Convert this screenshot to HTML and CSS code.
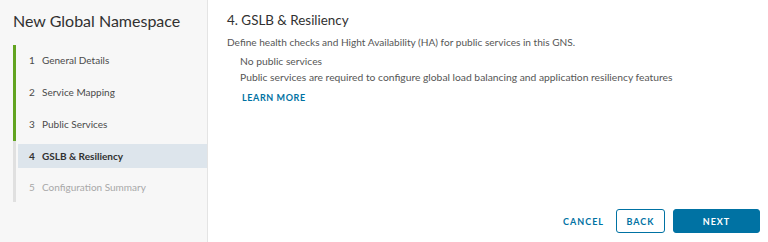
FILE: index.html
```html
<!DOCTYPE html>
<html>
<head>
<meta charset="utf-8">
<link rel="stylesheet" href="styles.css">
</head>
<body>
<div class="wizard">
  <aside class="nav">
    <h1 class="nav-title">New Global Namespace</h1>
    <ol class="steps">
      <li class="step done"><span class="num">1</span>General Details</li>
      <li class="step done"><span class="num">2</span>Service Mapping</li>
      <li class="step done"><span class="num">3</span>Public Services</li>
      <li class="step current"><span class="num">4</span>GSLB &amp; Resiliency</li>
      <li class="step todo"><span class="num">5</span>Configuration Summary</li>
    </ol>
  </aside>
  <main class="content">
    <h2 class="page-title">4. GSLB &amp; Resiliency</h2>
    <p class="desc">Define health checks and Hight Availability (HA) for public services in this GNS.</p>
    <div class="empty">
      <p class="empty-line">No public services</p>
      <p class="empty-line">Public services are required to configure global load balancing and application resiliency features</p>
      <a class="learn">LEARN MORE</a>
    </div>
    <div class="footer">
      <button class="btn link">CANCEL</button>
      <button class="btn outline">BACK</button>
      <button class="btn primary">NEXT</button>
    </div>
  </main>
</div>
</body>
</html>
```
FILE: styles.css
```css
* { box-sizing: border-box; }
html, body { margin: 0; padding: 0; }
body {
  width: 768px; height: 242px; overflow: hidden;
  font-family: "Lato", "Noto Sans", sans-serif;
  color: #565656;
  background: #fff;
}
.wizard { display: flex; height: 242px; }
.nav {
  width: 208px; flex: none;
  background: #f7f7f7;
  border-right: 1px solid #e4e4e4;
  padding: 10px 0 0 13px;
}
.nav-title {
  margin: 0;
  font-size: 16px; font-weight: 400; color: #313131;
  line-height: 22px;
}
.steps {
  list-style: none; margin: 13px 0 0 0; padding: 0;
  display: flex; flex-direction: column;
}
.step {
  height: 32px; display: flex; align-items: center;
  font-size: 10px; color: #4a4a4a;
  border-left: 3px solid #62a420;
  padding: 0 0 2px 13px;
  position: relative;
  isolation: isolate;
}
.step .num { width: 13px; }
.step.current {
  border-left-color: #e0e0e0;
  font-weight: 700; color: #313131;
}
.step.current::before {
  content: ""; position: absolute; left: 2px; right: 0; top: 3px; bottom: 5px;
  background: #dde5ec; z-index: -1;
}
.step.todo { border-left-color: #e0e0e0; color: #a8a8a8; height: 29px; }
.content {
  flex: 1; position: relative;
  padding: 11px 0 0 19px;
}
.page-title {
  margin: 0; font-size: 13.4px; font-weight: 400; color: #313131; line-height: 18px;
}
.desc { margin: 6px 0 0 0; font-size: 10.1px; line-height: 14px; color: #565656; }
.empty { padding-left: 13px; margin-top: 4px; }
.empty-line { margin: 0; font-size: 10.3px; line-height: 16px; color: #565656; }
.learn {
  display: inline-block; margin-top: 4px; margin-left: 2px;
  font-size: 9px; font-weight: 700; letter-spacing: 0.6px; color: #0072a3;
}
.footer {
  position: absolute; right: 8px; bottom: 9px;
  display: flex; gap: 8px; align-items: center;
}
.btn {
  font-family: inherit; font-size: 9px; font-weight: 700; letter-spacing: 1px;
  height: 24px; border-radius: 3px; cursor: pointer;
}
.btn.link { background: none; border: none; color: #0072a3; padding: 0 4px; margin-right: 0; margin-left: 1px; }
.btn.outline { background: #fff; border: 1px solid #0072a3; color: #0072a3; width: 49px; }
.btn.primary { background: #0072a3; border: 1px solid #0072a3; color: #fff; width: 87px; }
```
